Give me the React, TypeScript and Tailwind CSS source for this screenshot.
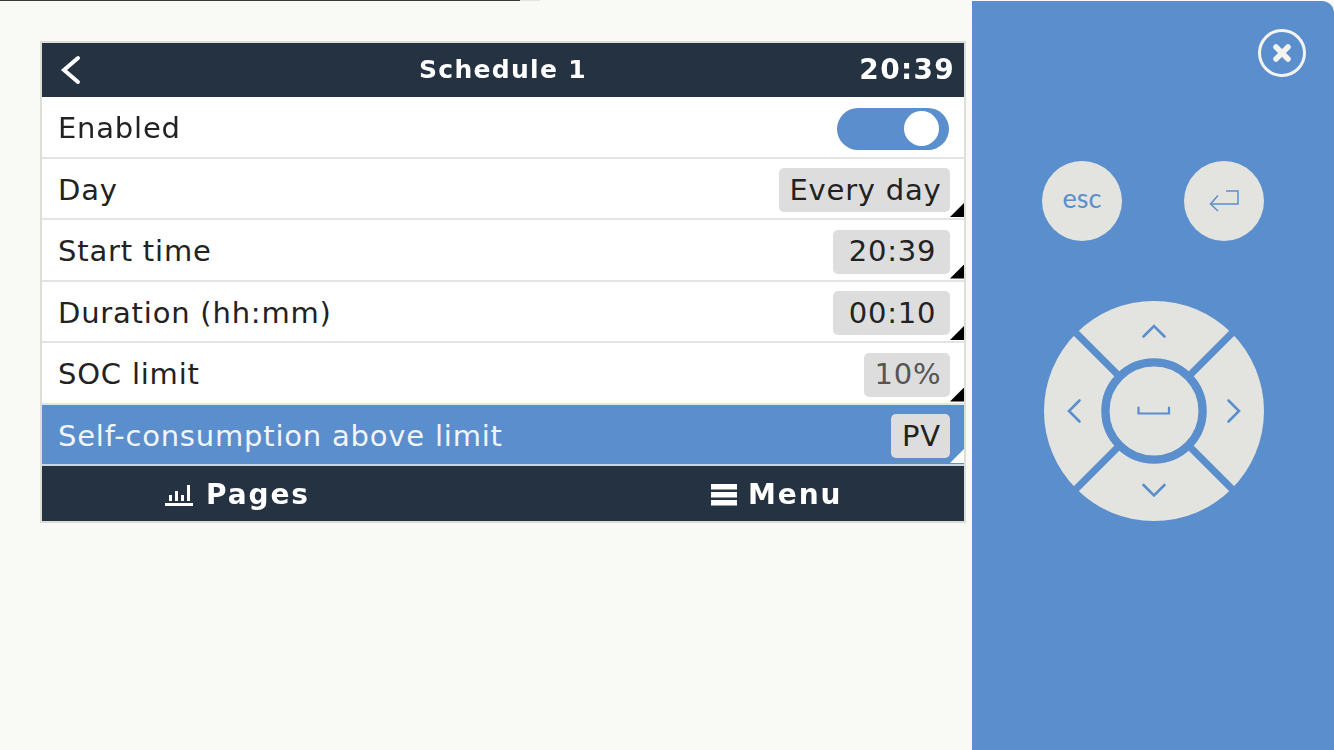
import clsx from 'clsx'

const rows = [
  { label: 'Day', value: 'Every day', width: 'w-[171px]' },
  { label: 'Start time', value: '20:39', width: 'w-[117px]' },
  { label: 'Duration (hh:mm)', value: '00:10', width: 'w-[117px]' },
  { label: 'SOC limit', value: '10%', width: 'w-[86px]', dim: true },
]

function ValueBox({ value, width, dim, selected }: { value: string; width: string; dim?: boolean; selected?: boolean }) {
  return (
    <>
      <div
        className={clsx(
          'h-[44px] rounded-[5px] bg-[#dddddd] flex items-center justify-center pl-[2px] text-[29px] tracking-[0.8px]',
          width,
          dim ? 'text-[#555555]' : 'text-[#222222]'
        )}
      >
        {value}
      </div>
      <div
        className={clsx(
          'absolute right-0 bottom-[1px] w-[14px] h-[14px] [clip-path:polygon(100%_0,100%_100%,0_100%)]',
          selected ? 'bg-white' : 'bg-black'
        )}
      />
    </>
  )
}

function DPad() {
  const blue = '#5a8ecc'
  return (
    <svg width="220" height="220" viewBox="0 0 220 220" fill="none">
      <circle cx="110" cy="110" r="110" fill="#e3e4e0" />
      <circle cx="110" cy="110" r="48.6" stroke={blue} strokeWidth="8.3" />
      <g stroke={blue} strokeWidth="7">
        <path d="M75 75 L28 28" />
        <path d="M145 75 L192 28" />
        <path d="M75 145 L28 192" />
        <path d="M145 145 L192 192" />
      </g>
      <g stroke={blue} strokeWidth="2.6" strokeLinecap="round" strokeLinejoin="miter">
        <path d="M99.5 35.5 L110 25 L120.5 35.5" />
        <path d="M99.5 184 L110 194.5 L120.5 184" />
        <path d="M35.5 99.5 L25 110 L35.5 120.5" />
        <path d="M184.5 99.5 L195 110 L184.5 120.5" />
      </g>
      <path d="M94.5 106.5 V112.5 H125 V106.5" stroke={blue} strokeWidth="2.2" strokeLinecap="round" />
    </svg>
  )
}

export default function App() {
  return (
    <div className="w-[1334px] h-[750px] overflow-hidden flex bg-[#f9faf5] font-['DejaVu_Sans',sans-serif]">
      <div className="w-[972px] shrink-0">
        <div className="flex">
          <div className="h-px w-[520px] bg-[#3b3b36]" />
          <div className="h-px w-[20px] bg-[#e4e4de]" />
        </div>

        {/* Device screen */}
        <div className="mt-[40px] ml-[40px] w-[926px] h-[482px] border-2 border-[#deded9] flex flex-col blur-[0.7px]">
          <div className="h-[54px] bg-[#253241] grid grid-cols-3 items-center text-white font-bold">
            <svg className="ml-[16px]" width="26" height="30" viewBox="0 0 26 30" fill="none">
              <path d="M20 3 L6 15 L20 27" stroke="white" strokeWidth="4" strokeLinecap="round" />
            </svg>
            <div className="text-center text-[25px] tracking-[1.3px]">Schedule 1</div>
            <div className="text-right pr-[9px] text-[28px] tracking-[1.3px]">20:39</div>
          </div>

          <div className="h-[61.5px] bg-white border-b-2 border-[#e4e4e4] flex items-center justify-between pt-[4px] pl-[16px] pr-[15px] text-[29px] tracking-[0.8px] text-[#222222]">
            <span>Enabled</span>
            <div className="w-[112px] h-[42px] rounded-full bg-[#5a8ecc] flex items-center justify-end pr-[10px]">
              <div className="w-[35px] h-[35px] rounded-full bg-white" />
            </div>
          </div>

          {rows.map((row) => (
            <div
              key={row.label}
              className="relative h-[61.5px] bg-white border-b-2 border-[#e4e4e4] flex items-center justify-between pt-[4px] pl-[16px] pr-[14px] text-[29px] tracking-[0.8px] text-[#222222]"
            >
              <span>{row.label}</span>
              <ValueBox value={row.value} width={row.width} dim={row.dim} />
            </div>
          ))}

          <div className="relative h-[61.5px] bg-[#5a8ecc] border-b-2 border-[#c9d6e4] flex items-center justify-between pt-[4px] pl-[16px] pr-[14px] text-[29px] tracking-[0.8px] text-[#f2f5f8]">
            <span>Self-consumption above limit</span>
            <ValueBox value="PV" width="w-[59px]" selected />
          </div>

          <div className="h-[55px] pt-[2px] bg-[#253241] flex items-center text-white font-bold text-[28px] tracking-[1.9px]">
            <div className="w-[669px] pl-[123px] flex items-center gap-[13px]">
              <svg width="28" height="24" viewBox="0 0 28 24" fill="white">
                <rect x="0" y="20" width="28" height="3" />
                <rect x="4" y="12" width="3" height="6" />
                <rect x="10" y="8" width="3" height="10" />
                <rect x="16" y="12" width="3" height="6" />
                <rect x="22" y="2" width="3" height="16" />
              </svg>
              <span>Pages</span>
            </div>
            <div className="flex items-center gap-[11px]">
              <svg width="26" height="22" viewBox="0 0 26 22" fill="white">
                <rect x="0" y="0" width="26" height="5.5" />
                <rect x="0" y="8" width="26" height="5.5" />
                <rect x="0" y="16" width="26" height="5.5" />
              </svg>
              <span>Menu</span>
            </div>
          </div>
        </div>
      </div>

      {/* Remote control panel */}
      <div className="w-[362px] mt-px bg-[#5a8ecc] rounded-tr-[12px] flex flex-col">
        <div className="self-end mt-[28px] mr-[28px] w-[48px] h-[48px] rounded-full border-[3px] border-[#f3f4f0] flex items-center justify-center">
          <svg width="22" height="22" viewBox="0 0 22 22" fill="none">
            <path d="M5 5 L17 17 M17 5 L5 17" stroke="#f3f4f0" strokeWidth="5.5" strokeLinecap="round" />
          </svg>
        </div>

        <div className="mt-[84px] ml-[70px] flex gap-[62px]">
          <div className="w-[80px] h-[80px] rounded-full bg-[#e3e4e0] flex items-center justify-center pb-[6px] text-[#5a8ecc] text-[27px] font-['Lato',sans-serif]">
            esc
          </div>
          <div className="w-[80px] h-[80px] rounded-full bg-[#e3e4e0] flex items-center justify-center">
            <svg width="32" height="24" viewBox="0 0 32 24" fill="none" stroke="#5a8ecc" strokeWidth="1.5">
              <path d="M18 2 H30 V15 H3" />
              <path d="M10 6.5 L2.5 15 L10 22" />
            </svg>
          </div>
        </div>

        <div className="mt-[60px] ml-[72px]">
          <DPad />
        </div>
      </div>
    </div>
  )
}
